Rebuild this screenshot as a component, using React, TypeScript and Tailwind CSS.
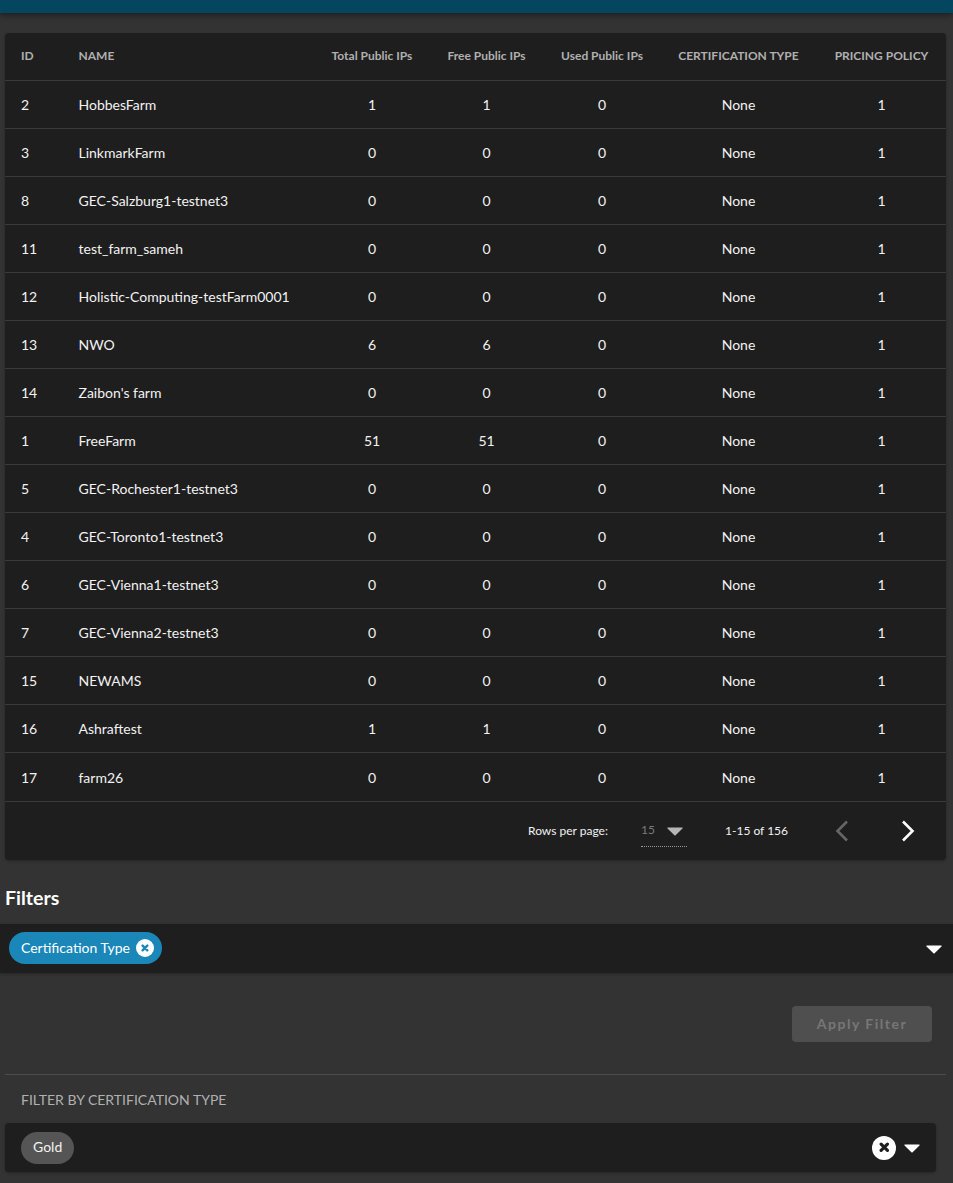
const rows: [number, string, number, number][] = [
  [2, 'HobbesFarm', 1, 1],
  [3, 'LinkmarkFarm', 0, 0],
  [8, 'GEC-Salzburg1-testnet3', 0, 0],
  [11, 'test_farm_sameh', 0, 0],
  [12, 'Holistic-Computing-testFarm0001', 0, 0],
  [13, 'NWO', 6, 6],
  [14, "Zaibon's farm", 0, 0],
  [1, 'FreeFarm', 51, 51],
  [5, 'GEC-Rochester1-testnet3', 0, 0],
  [4, 'GEC-Toronto1-testnet3', 0, 0],
  [6, 'GEC-Vienna1-testnet3', 0, 0],
  [7, 'GEC-Vienna2-testnet3', 0, 0],
  [15, 'NEWAMS', 0, 0],
  [16, 'Ashraftest', 1, 1],
  [17, 'farm26', 0, 0],
]

function Caret({ className }: { className: string }) {
  return (
    <svg viewBox="0 0 16 9" className={className} fill="currentColor">
      <path d="M1 0.5h14c.6 0 .9.7.5 1.1L8.6 8.2c-.3.3-.9.3-1.2 0L.5 1.6C.1 1.2.4.5 1 .5z" />
    </svg>
  )
}

function ClearDot({ size, fg }: { size: string; fg: string }) {
  return (
    <span className={`flex items-center justify-center rounded-full bg-white ${size}`}>
      <svg viewBox="0 0 10 10" className={`w-[44%] h-[44%] ${fg}`} stroke="currentColor" strokeWidth="3" strokeLinecap="round">
        <path d="M2 2l6 6M8 2l-6 6" />
      </svg>
    </span>
  )
}

export default function App() {
  return (
    <div className="w-[953px] h-[1183px] overflow-hidden bg-[#333333] text-white font-['Lato',sans-serif]">
      <div className="h-[13px] bg-[#04455f] shadow-[0_2px_6px_rgba(0,0,0,0.45)]" />

      <div className="mx-[5px] mt-5 w-[941px] h-[827px] rounded bg-[#1e1e1e] shadow-[0_1px_3px_rgba(0,0,0,0.3)]">
        <table className="w-[941px] table-fixed border-collapse text-sm">
          <colgroup>
            <col className="w-[58px]" />
            <col className="w-[252px]" />
            <col className="w-[114px]" />
            <col className="w-[115px]" />
            <col className="w-[116px]" />
            <col className="w-[157px]" />
            <col className="w-[129px]" />
          </colgroup>
          <thead>
            <tr className="h-[47px] border-b border-[#3a3a3a] text-[#b0b0b0] text-xs font-bold">
              <th className="pl-4 pb-px text-left font-bold">ID</th>
              <th className="pl-[15.5px] pb-px text-left font-bold">NAME</th>
              <th className="font-bold">Total Public IPs</th>
              <th className="font-bold">Free Public IPs</th>
              <th className="font-bold">Used Public IPs</th>
              <th className="font-bold">CERTIFICATION TYPE</th>
              <th className="font-bold">PRICING POLICY</th>
            </tr>
          </thead>
          <tbody>
            {rows.map(([id, name, total, free], i) => (
              <tr key={id} className={`border-b border-[#3a3a3a] text-[#f2f2f2] ${i === 14 ? 'h-[49px]' : 'h-[48px]'}`}>
                <td className="pl-4 pt-[2px]">{id}</td>
                <td className="pl-[15.5px] pt-[2px] whitespace-nowrap">{name}</td>
                <td className="pt-[2px] text-center">{total}</td>
                <td className="pt-[2px] text-center">{free}</td>
                <td className="pt-[2px] text-center">0</td>
                <td className="pt-[2px] text-center">None</td>
                <td className="pt-[2px] text-center">1</td>
              </tr>
            ))}
          </tbody>
        </table>

        <div className="h-[58px] flex items-center text-xs text-[#f2f2f2]">
          <span className="ml-[523px] w-[113px]">Rows per page:</span>
          <div className="w-[46px] h-[32px] flex items-center justify-between border-b border-dotted border-[#9a9a9a] text-[#7a7a7a]">
            <span>15</span>
            <Caret className="w-[16px] h-[9px] mt-[2px] text-[#b5b5b5] mr-1" />
          </div>
          <span className="ml-[38px] w-[61px] whitespace-nowrap">1-15 of 156</span>
          <svg viewBox="0 0 16 24" className="ml-[48px] w-[16px] h-[24px] text-[#666666]" fill="none" stroke="currentColor" strokeWidth="2.6">
            <path d="M13 2.500L3.500 12l9.500 9.500" />
          </svg>
          <svg viewBox="0 0 16 24" className="ml-[50px] w-[16px] h-[24px] text-white" fill="none" stroke="currentColor" strokeWidth="2.6">
            <path d="M3 2.500l9.500 9.500L3 21.500" />
          </svg>
        </div>
      </div>

      <h2 className="mt-[26px] px-[5px] text-[19.5px] font-bold leading-6">Filters</h2>

      <div className="mt-[14px] h-[49px] flex items-center justify-between bg-[#1e1e1e] pl-[9px] pr-[11px] shadow-[0_1px_3px_rgba(0,0,0,0.3)]">
        <div className="-mt-px h-[32px] flex items-center gap-[6px] rounded-full bg-[#1a87b8] pl-3 pr-[8px] text-sm">
          <span className="whitespace-nowrap">Certification Type</span>
          <ClearDot size="w-[18px] h-[18px]" fg="text-[#1a87b8]" />
        </div>
        <Caret className="w-[16px] h-[9px] mt-[2px] text-white" />
      </div>

      <div className="mt-[33px] flex justify-end pr-[21px]">
        <button className="w-[140px] h-[36px] rounded bg-[#4f4f4f] text-sm font-bold tracking-[1.5px] text-[#777777]">
          Apply Filter
        </button>
      </div>

      <div className="ml-[5px] mt-[32px] w-[941px] border-t border-[#4d4d4d] pl-4 pt-4 text-sm leading-[18px] text-[#b0b0b0]">
        FILTER BY CERTIFICATION TYPE
      </div>

      <div className="ml-[5px] mt-[14px] w-[931px] h-[49px] flex items-center justify-between rounded bg-[#1e1e1e] pl-4 pr-4 shadow-[0_1px_3px_rgba(0,0,0,0.3)]">
        <span className="h-[32px] flex items-center rounded-full bg-[#555555] px-3 pb-[2px] text-sm text-[#f2f2f2]">Gold</span>
        <div className="flex items-center gap-2">
          <ClearDot size="w-[24px] h-[24px]" fg="text-[#1e1e1e]" />
          <Caret className="w-[16px] h-[9px] mt-[2px] text-white" />
        </div>
      </div>
    </div>
  )
}
